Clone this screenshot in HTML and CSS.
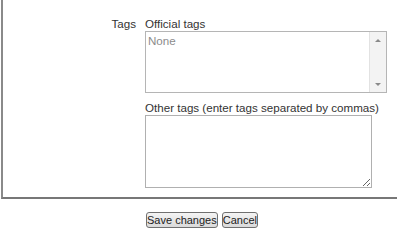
FILE: index.html
```html
<!DOCTYPE html>
<html lang="en">
<head>
  <meta charset="UTF-8" />
  <title>Edit tags</title>
  <link rel="stylesheet" href="styles.css">
</head>
<body>

  <div class="panel">
    <div class="row">
      <div class="label">Tags</div>
      <div class="field">
        <div class="caption">Official tags</div>
        <div class="listbox">
          <div class="options">
            <div class="option disabled">None</div>
          </div>
          <div class="scrollbar">
            <span class="arrow up"></span>
            <span class="arrow down"></span>
          </div>
        </div>

        <div class="caption other">Other tags (enter tags separated by commas)</div>
        <textarea class="tags-input"></textarea>
      </div>
    </div>
  </div>

  <div class="actions">
    <button class="btn">Save changes</button>
    <button class="btn">Cancel</button>
  </div>

</body>
</html>
```

FILE: styles.css
```css
body {
  font-family: "Liberation Sans", Arial, sans-serif;
  font-size: 11.6px;
  color: #333;
  background: #fff;
  margin: 0;
}

.panel {
  margin-left: 1px;
  height: 199px;
  box-sizing: border-box;
  border-left: 2px solid #8a8a8a;
  border-bottom: 2px solid #777;
  padding-top: 17px;
}

.row {
  display: flex;
}

.label {
  width: 133px;
  text-align: right;
  line-height: 14px;
  padding-right: 9px;
}

.field {
  display: flex;
  flex-direction: column;
}

.caption {
  line-height: 14px;
  white-space: nowrap;
}

.caption.other {
  margin-top: 8px;
  line-height: 14px;
}

.listbox {
  display: flex;
  width: 242px;
  height: 62px;
  box-sizing: border-box;
  border: 1px solid #b5b5b5;
}

.options {
  flex: 1;
  padding: 2px 2px;
}

.option {
  line-height: 14px;
}

.option.disabled {
  color: #8c8c8c;
}

.scrollbar {
  width: 16px;
  background: #f3f3f3;
  border-left: 1px solid #e2e2e2;
  position: relative;
}

.arrow {
  position: absolute;
  left: 5px;
  width: 0;
  height: 0;
  border-left: 3px solid transparent;
  border-right: 3px solid transparent;
}

.arrow.up {
  top: 7px;
  border-bottom: 3px solid #8a8a8a;
}

.arrow.down {
  bottom: 6px;
  border-top: 3px solid #8a8a8a;
}

.tags-input {
  width: 227px;
  height: 73px;
  box-sizing: border-box;
  border: 1px solid #b0b0b0;
  margin: 0;
  padding: 2px;
  font-family: inherit;
  font-size: 11.6px;
}

.actions {
  padding: 13px 0 0 146px;
  display: flex;
  gap: 4px;
}

.btn {
  font-family: "Liberation Sans", Arial, sans-serif;
  font-size: 11px;
  color: #222;
  line-height: 14px;
  padding: 0;
  border: 1px solid #707070;
  border-radius: 3px;
  background: linear-gradient(#f4f4f4, #dadada);
}
```
